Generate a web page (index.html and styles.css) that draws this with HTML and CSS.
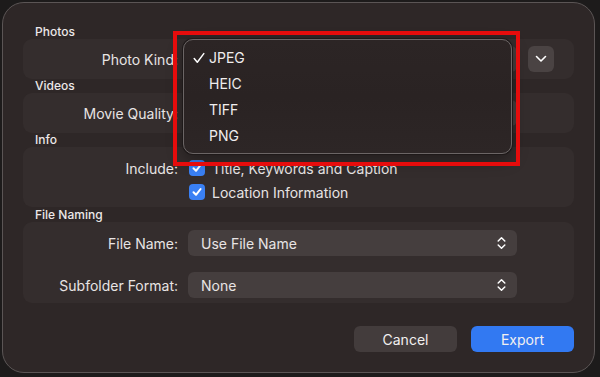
FILE: index.html
```html
<!DOCTYPE html>
<html lang="en">
<head>
    <meta charset="UTF-8">
    <meta name="viewport" content="width=device-width, initial-scale=1.0">
    <title>Export</title>
    <link rel="stylesheet" href="styles.css">
</head>
<body>
    <div class="dialog">
        <div class="section-title">Photos</div>
        <div class="group group-photos">
            <div class="row">
                <label class="row-label">Photo Kind:</label>
                <!-- popup sits under the open menu -->
                <div class="popup"></div>
                <button class="disclosure">
                    <svg width="12" height="8" viewBox="0 0 12 8"><path d="M1.5 1.5 L6 6 L10.5 1.5" fill="none" stroke="#fff" stroke-width="1.6" stroke-linecap="round" stroke-linejoin="round"/></svg>
                </button>
            </div>
        </div>

        <div class="section-title">Videos</div>
        <div class="group group-videos">
            <div class="row">
                <label class="row-label">Movie Quality:</label>
                <div class="popup"></div>
            </div>
        </div>

        <div class="section-title">Info</div>
        <div class="group group-info">
            <div class="row check-row">
                <label class="row-label">Include:</label>
                <span class="checkbox">
                    <svg width="12" height="12" viewBox="0 0 12 12"><path d="M2.5 6.3 L5 8.8 L9.6 3" fill="none" stroke="#fff" stroke-width="2" stroke-linecap="round" stroke-linejoin="round"/></svg>
                </span>
                <span class="check-text">Title, Keywords and Caption</span>
            </div>
            <div class="row check-row">
                <span class="row-label"></span>
                <span class="checkbox">
                    <svg width="12" height="12" viewBox="0 0 12 12"><path d="M2.5 6.3 L5 8.8 L9.6 3" fill="none" stroke="#fff" stroke-width="2" stroke-linecap="round" stroke-linejoin="round"/></svg>
                </span>
                <span class="check-text">Location Information</span>
            </div>
        </div>

        <div class="section-title naming-title">File Naming</div>
        <div class="group group-naming">
            <div class="row">
                <label class="row-label">File Name:</label>
                <div class="popup">
                    <span>Use File Name</span>
                    <svg class="updown" width="9" height="14" viewBox="0 0 9 14"><path d="M1.2 5 L4.5 1.8 L7.8 5 M1.2 9 L4.5 12.2 L7.8 9" fill="none" stroke="#fff" stroke-width="1.5" stroke-linecap="round" stroke-linejoin="round"/></svg>
                </div>
            </div>
            <div class="row">
                <label class="row-label">Subfolder Format:</label>
                <div class="popup">
                    <span>None</span>
                    <svg class="updown" width="9" height="14" viewBox="0 0 9 14"><path d="M1.2 5 L4.5 1.8 L7.8 5 M1.2 9 L4.5 12.2 L7.8 9" fill="none" stroke="#fff" stroke-width="1.5" stroke-linecap="round" stroke-linejoin="round"/></svg>
                </div>
            </div>
        </div>

        <div class="footer">
            <button class="btn btn-cancel">Cancel</button>
            <button class="btn btn-export">Export</button>
        </div>

        <!-- open popup menu for Photo Kind -->
        <div class="menu">
            <div class="menu-item">
                <svg class="tick" width="12" height="12" viewBox="0 0 12 12"><path d="M1.2 6.6 L4.3 10.2 L10.8 1.6" fill="none" stroke="#fff" stroke-width="1.5" stroke-linecap="round" stroke-linejoin="round"/></svg>
                JPEG
            </div>
            <div class="menu-item">HEIC</div>
            <div class="menu-item">TIFF</div>
            <div class="menu-item">PNG</div>
        </div>
        <div class="highlight"></div>
    </div>
</body>
</html>
```

FILE: styles.css
```css
body {
    margin: 0;
    background-color: #1d1b1b;
    font-family: Inter, "Noto Sans", sans-serif;
    color: #e8e4e4;
}
.dialog {
    position: relative;
    box-sizing: border-box;
    width: 593px;
    height: 371px;
    margin: 2px 0 0 2px;
    padding: 22px 20px 0 20px;
    background-color: #2e2727;
    border: 1px solid #5b5555;
    border-radius: 22px;
}
.section-title {
    height: 14px;
    line-height: 14px;
    padding-left: 12px;
    font-size: 12px;
    font-weight: 500;
    color: #ece8e8;
}
.naming-title {
    margin-top: 1px;
}
.group {
    box-sizing: border-box;
    background-color: #342d2d;
    border-radius: 9px;
}
.group-photos,
.group-videos {
    height: 40px;
    padding-top: 1px;
}
.group-info {
    height: 60px;
    padding: 9px 0 3px;
}
.group-naming {
    height: 81px;
    padding-top: 8px;
    display: flex;
    flex-direction: column;
    gap: 16px;
}
.row {
    display: flex;
    align-items: center;
    gap: 10px;
    height: 38px;
}
.check-row {
    height: 24px;
}
.group-naming .row {
    height: 26px;
}
.row-label {
    width: 155px;
    flex-shrink: 0;
    text-align: right;
    font-size: 14px;
}
.popup {
    box-sizing: border-box;
    width: 329px;
    height: 26px;
    display: flex;
    align-items: center;
    justify-content: space-between;
    padding: 0 11px 0 13px;
    background-color: #453e3e;
    border-radius: 6px;
    font-size: 14px;
}
.disclosure {
    width: 26px;
    height: 26px;
    margin-left: 1px;
    padding: 0;
    border: none;
    border-radius: 6px;
    background-color: #4a4343;
    display: flex;
    align-items: center;
    justify-content: center;
}
.checkbox {
    width: 16px;
    height: 16px;
    border-radius: 4px;
    background-color: #3a80f4;
    display: flex;
    align-items: center;
    justify-content: center;
    margin-left: 1px;
    margin-right: -3px;
}
.check-text {
    font-size: 14px;
}
.footer {
    display: flex;
    justify-content: flex-end;
    gap: 14px;
    margin-top: 23px;
}
.btn {
    width: 103px;
    height: 26px;
    border: none;
    border-radius: 6px;
    font-family: Inter, "Noto Sans", sans-serif;
    font-size: 14px;
    color: #f2f0f0;
}
.btn-cancel {
    background-color: #433c3c;
}
.btn-export {
    background-color: #3279f2;
}
.menu {
    position: absolute;
    left: 180px;
    top: 36px;
    box-sizing: border-box;
    width: 329px;
    height: 115px;
    padding: 5px 0;
    background: linear-gradient(#2c2525, #2a2323 50%, #2d2626);
    border: 1px solid #6b6565;
    border-radius: 10px;
    box-shadow: 0 0 0 1px #1e1919, 0 6px 16px rgba(0, 0, 0, 0.35);
}
.menu-item {
    position: relative;
    height: 26px;
    line-height: 26px;
    padding-left: 25px;
    font-size: 14px;
    color: #f0eded;
}
.tick {
    position: absolute;
    left: 9px;
    top: 7px;
}
.highlight {
    position: absolute;
    left: 170px;
    top: 28px;
    width: 347px;
    height: 135px;
    box-sizing: border-box;
    border: 4px solid #e60c0c;
}
```
